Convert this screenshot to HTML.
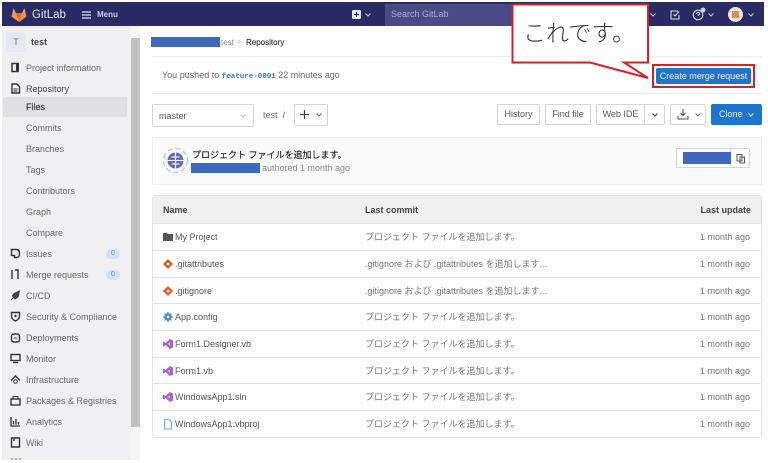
<!DOCTYPE html>
<html><head><meta charset="utf-8"><style>
*{box-sizing:border-box}
html,body{margin:0;padding:0;background:#fff;width:768px;height:463px;overflow:hidden}
body{position:relative;font-family:"Liberation Sans","Noto Sans CJK JP",sans-serif;font-size:9px;color:#555}
#w{position:absolute;left:0;top:0;width:768px;height:463px;filter:blur(.35px);overflow:hidden}
.a{position:absolute;white-space:nowrap}
.nav{font-size:9px;color:#666;line-height:12px}
.sub{left:26px}
.ic{position:absolute;left:10px}
.row{position:absolute;left:153px;width:608px;height:27px;border-top:1px solid #e5e5e5}
.row .n{position:absolute;left:22px;top:7px;font-size:9px;color:#555;line-height:12px}
.row .c{position:absolute;left:212px;top:7px;font-size:9px;color:#777;line-height:12px}
.row .t{position:absolute;right:11px;top:7px;font-size:9px;color:#777;line-height:12px}
.row svg{position:absolute;left:10px;top:8px}
.btn{position:absolute;border:1px solid #d5d5d5;border-radius:2px;background:#fff;color:#555;font-size:9px;text-align:center;height:21px;line-height:19px}
.blue{background:#3e68bd;position:absolute}
.pill{position:absolute;left:106px;width:14px;height:10px;border-radius:5px;background:#cfe2f5;color:#5b8fc8;font-size:7px;text-align:center;line-height:10px}
</style></head><body><div id="w">
<!-- header -->
<div class="a" style="left:2px;top:2px;width:762px;height:24px;background:#2a2b65"></div>
<svg class="a" style="left:11px;top:7px" width="16" height="15" viewBox="0 0 16 15"><path d="M8 15L.5 9.500 2.500 1 5 6h6l2.500-5 2 8.500z" fill="#f09a4a"/><path d="M8 15L5 6h6z" fill="#e8692e"/></svg>
<div class="a" style="left:32px;top:8px;color:#e4e4ee;font-size:11.500px;line-height:15px">GitLab</div>
<svg class="a" style="left:82px;top:11px" width="9" height="8"><path d="M0 1h9M0 4h9M0 7h9" stroke="#dfdfee" stroke-width="1.200"/></svg>
<div class="a" style="left:97px;top:9px;color:#c9c9e0;font-size:8px;font-weight:bold;line-height:11px">Menu</div>
<svg class="a" style="left:352px;top:10px" width="9" height="9"><rect width="9" height="9" rx="1.500" fill="#e8e8f2"/><path d="M4.500 2v5M2 4.500h5" stroke="#2a2b65" stroke-width="1.200"/></svg>
<svg class="a" style="left:365px;top:13px" width="6" height="4"><path d="M.5.5L3 3 5.500.5" stroke="#c9c9e0" fill="none"/></svg>
<div class="a" style="left:385px;top:4px;width:130px;height:22px;background:#4a4a85"></div>
<div class="a" style="left:391px;top:9px;color:#a9a9cf;font-size:9px;line-height:11px">Search GitLab</div>
<svg class="a" style="left:650px;top:13px" width="6" height="4"><path d="M.5.5L3 3 5.500.5" stroke="#c9c9e0" fill="none"/></svg>
<svg class="a" style="left:670px;top:10px" width="10" height="10"><path d="M8 1H1v8h8V5M3.500 4.500L5 6 9 1.500" stroke="#dcdcec" fill="none" stroke-width="1.100"/></svg>
<svg class="a" style="left:692px;top:7px" width="14" height="14"><circle cx="6" cy="8" r="4.800" stroke="#dcdcec" fill="none" stroke-width="1.100"/><path d="M4.500 7c0-2 3-2 3 0 0 1-1.500 1-1.500 2" stroke="#dcdcec" fill="none"/><circle cx="11" cy="3" r="2.500" fill="#c5d3f0"/></svg>
<svg class="a" style="left:708px;top:13px" width="6" height="4"><path d="M.5.5L3 3 5.500.5" stroke="#c9c9e0" fill="none"/></svg>
<div class="a" style="left:728px;top:7px;width:15px;height:15px;border-radius:50%;background:#f3e6d8"></div>
<div class="a" style="left:732px;top:11px;width:7px;height:7px;background:#dd8a62"></div>
<svg class="a" style="left:748px;top:13px" width="6" height="4"><path d="M.5.5L3 3 5.500.5" stroke="#c9c9e0" fill="none"/></svg>
<!-- sidebar -->
<div class="a" style="left:2px;top:26px;width:129px;height:434px;background:#f0f0f2"></div>
<div class="a" style="left:131px;top:26px;width:9px;height:434px;background:#f5f5f5"></div>
<div class="a" style="left:131px;top:38px;width:9px;height:389px;background:#c1c1c1"></div>
<div class="a" style="left:6px;top:32px;width:20px;height:20px;background:#e8e8f0;border-radius:2px;color:#777;text-align:center;line-height:20px;font-size:9px">T</div>
<div class="a" style="left:31px;top:36px;font-size:9px;font-weight:bold;color:#444;line-height:12px">test</div>
<div class="a" style="left:3px;top:97px;width:124px;height:20px;background:#e0e0e4;border-radius:2px"></div>
<svg class="ic" style="top:62px" width="11" height="11"><path d="M2 1.500h6v8H2z" fill="none" stroke="#333" stroke-width="1.500"/><path d="M6 1.500h3v8H6z" fill="#333"/></svg>
<div class="a nav sub" style="top:62px">Project information</div>
<svg class="ic" style="top:83px" width="11" height="11"><path d="M2 1h5l2.500 2.500V10H2z" fill="none" stroke="#333" stroke-width="1.400"/><path d="M3.500 6h4M3.500 8h4" stroke="#333"/></svg>
<div class="a nav sub" style="top:83px;color:#444">Repository</div>
<div class="a nav sub" style="top:101px;color:#444;-webkit-text-stroke:.25px #444">Files</div>
<div class="a nav sub" style="top:122px">Commits</div>
<div class="a nav sub" style="top:143px">Branches</div>
<div class="a nav sub" style="top:164px">Tags</div>
<div class="a nav sub" style="top:185px">Contributors</div>
<div class="a nav sub" style="top:206px">Graph</div>
<div class="a nav sub" style="top:227px">Compare</div>
<svg class="ic" style="top:248px" width="11" height="11"><path d="M1.500 1.500h5c2 0 3 1.500 3 4s-1 4-3 4h-2v-2h-3z" fill="none" stroke="#333" stroke-width="1.400"/></svg>
<div class="a nav sub" style="top:248px">Issues</div><div class="pill" style="top:249px">0</div>
<svg class="ic" style="top:269px" width="11" height="11"><path d="M2 1v9M8 3v7M5 1h3v2" fill="none" stroke="#333" stroke-width="1.400"/></svg>
<div class="a nav sub" style="top:269px">Merge requests</div><div class="pill" style="top:270px">0</div>
<svg class="ic" style="top:290px" width="11" height="11"><path d="M1 10l3-3M4 3.500L9.500 1 8 7 5 9 2.500 6z" fill="#444" stroke="#444"/></svg>
<div class="a nav sub" style="top:290px">CI/CD</div>
<svg class="ic" style="top:311px" width="11" height="11"><path d="M1.500 1.500h8v4c0 2-2 3.500-4 4.500-2-1-4-2.500-4-4.500z" fill="none" stroke="#333" stroke-width="1.400"/><circle cx="5.500" cy="5" r="1.200" fill="#333"/></svg>
<div class="a nav sub" style="top:311px">Security &amp; Compliance</div>
<svg class="ic" style="top:332px" width="11" height="11"><rect x="1.500" y="2" width="8" height="8" rx="2.500" fill="none" stroke="#333" stroke-width="1.400"/><path d="M4 6h3" stroke="#333"/></svg>
<div class="a nav sub" style="top:332px">Deployments</div>
<svg class="ic" style="top:353px" width="11" height="11"><rect x="1" y="1.500" width="9" height="6" fill="none" stroke="#333" stroke-width="1.400"/><path d="M3 9.500h5" stroke="#333" stroke-width="1.400"/></svg>
<div class="a nav sub" style="top:353px">Monitor</div>
<svg class="ic" style="top:374px" width="11" height="11"><path d="M1 6.500L5.500 2 10 6.500" fill="none" stroke="#333" stroke-width="1.400"/><circle cx="5.500" cy="7.500" r="1.800" fill="none" stroke="#333"/></svg>
<div class="a nav sub" style="top:374px">Infrastructure</div>
<svg class="ic" style="top:395px" width="11" height="11"><rect x="1" y="4" width="9" height="6" fill="none" stroke="#333" stroke-width="1.400"/><path d="M3 4V1.500h5V4" fill="none" stroke="#333"/></svg>
<div class="a nav sub" style="top:395px">Packages &amp; Registries</div>
<svg class="ic" style="top:416px" width="11" height="11"><path d="M1 1v9h9M3.500 5v3.500M6 3v5.500M8.500 6v2.500" fill="none" stroke="#333" stroke-width="1.300"/></svg>
<div class="a nav sub" style="top:416px">Analytics</div>
<svg class="ic" style="top:437px" width="11" height="11"><path d="M1.500 1h8v9h-8zM4 1v3" fill="none" stroke="#333" stroke-width="1.400"/></svg>
<div class="a nav sub" style="top:437px">Wiki</div>
<svg class="a" style="left:11px;top:458px" width="10" height="2"><path d="M0 1h2M4 1h2M8 1h2" stroke="#666"/></svg>
<!-- breadcrumb -->
<div class="blue" style="left:151px;top:37px;width:69px;height:10px"></div>
<div class="a" style="left:221px;top:37px;font-size:8px;color:#888;line-height:11px">test</div>
<div class="a" style="left:237px;top:37px;font-size:7px;color:#aaa;line-height:11px">&gt;</div>
<div class="a" style="left:246px;top:37px;font-size:8px;color:#333;line-height:11px;-webkit-text-stroke:.15px #333">Repository</div>
<div class="a" style="left:152px;top:56px;width:610px;height:1px;background:#ececec"></div>
<div class="a" style="left:162px;top:69px;font-size:9px;color:#666;line-height:12px">You pushed to <span style="font-family:'Liberation Mono',monospace;font-size:7.500px;color:#3b77b8;font-weight:bold">feature-0001</span> 22 minutes ago</div>
<div class="a" style="left:152px;top:93px;width:610px;height:1px;background:#ececec"></div>
<!-- buttons -->
<div class="btn" style="left:152px;top:104px;width:102px;height:23px;text-align:left;padding-left:6px;line-height:22px">master</div>
<svg class="a" style="left:240px;top:114px" width="6" height="4"><path d="M.5.5L3 3 5.500.5" stroke="#bbb" fill="none"/></svg>
<div class="a" style="left:263px;top:109px;font-size:9px;color:#666;line-height:12px">test &nbsp;/</div>
<div class="btn" style="left:294px;top:104px;width:34px;height:22px"></div>
<svg class="a" style="left:300px;top:110px" width="9" height="9"><path d="M4.500 0v9M0 4.500h9" stroke="#444" stroke-width="1.200"/></svg>
<svg class="a" style="left:316px;top:113px" width="6" height="4"><path d="M.5.5L3 3 5.500.5" stroke="#666" fill="none"/></svg>
<div class="btn" style="left:497px;top:104px;width:43px">History</div>
<div class="btn" style="left:545px;top:104px;width:46px">Find file</div>
<div class="btn" style="left:596px;top:104px;width:49px;border-radius:2px 0 0 2px">Web IDE</div>
<div class="btn" style="left:644px;top:104px;width:21px;border-radius:0 2px 2px 0"></div>
<svg class="a" style="left:652px;top:113px" width="6" height="4"><path d="M.5.5L3 3 5.500.5" stroke="#444" fill="none" stroke-width="1.200"/></svg>
<div class="btn" style="left:670px;top:104px;width:36px"></div>
<svg class="a" style="left:677px;top:108px" width="12" height="12"><path d="M6 1v6M3.500 5L6 7.500 8.500 5M1 8v3h10V8" fill="none" stroke="#555" stroke-width="1.100"/></svg>
<svg class="a" style="left:695px;top:113px" width="6" height="4"><path d="M.5.5L3 3 5.500.5" stroke="#777" fill="none"/></svg>
<div class="btn" style="left:711px;top:104px;width:51px;background:#1f75cb;border-color:#1f75cb;color:#e6f0fa;text-align:left;padding-left:7px">Clone</div>
<svg class="a" style="left:748px;top:113px" width="6" height="4"><path d="M.5.5L3 3 5.500.5" stroke="#e6f0fa" fill="none"/></svg>
<!-- commit box -->
<div class="a" style="left:152px;top:137px;width:610px;height:48px;background:#fafafa;border:1px solid #ececec;border-radius:2px"></div>
<svg class="a" style="left:162px;top:147px" width="27" height="27" viewBox="0 0 27 27"><circle cx="13.500" cy="13.500" r="12" fill="none" stroke="#b9c4e6" stroke-width="1.300" stroke-dasharray="5 3"/><circle cx="13.500" cy="13.500" r="8" fill="#5a68b8"/><path d="M13.500 5.500v16M5.500 13.500h16M9.500 10h8M9.500 17h8" stroke="#eef" stroke-width="1.300"/></svg>
<div class="a" style="left:192px;top:148px;font-size:9px;color:#222;line-height:14px;-webkit-text-stroke:.15px #222">プロジェクト ファイルを追加します。</div>
<div class="blue" style="left:191px;top:163px;width:69px;height:10px"></div>
<div class="a" style="left:262px;top:162px;font-size:9px;color:#888;line-height:12px">authored 1 month ago</div>
<div class="btn" style="left:676px;top:148px;width:74px;height:20px"></div>
<div class="a" style="left:730px;top:149px;width:1px;height:18px;background:#ddd"></div>
<div class="blue" style="left:683px;top:152px;width:48px;height:12px"></div>
<svg class="a" style="left:736px;top:153px" width="9" height="11"><path d="M1 1.500h5V8H1zM4 4h4.500v6H4z" fill="#fff" stroke="#555"/></svg>
<!-- table -->
<div class="a" style="left:152px;top:195px;width:610px;height:243px;border:1px solid #e5e5e5;border-radius:3px"></div>
<div class="a" style="left:153px;top:196px;width:608px;height:27px;background:#f0f0f0"></div>
<div class="a" style="left:163px;top:204px;font-size:9px;font-weight:bold;color:#444;line-height:12px">Name</div>
<div class="a" style="left:365px;top:204px;font-size:9px;font-weight:bold;color:#444;line-height:12px">Last commit</div>
<div class="a" style="right:17px;top:204px;font-size:9px;font-weight:bold;color:#444;line-height:12px">Last update</div>
<div class="row" style="top:223px"><svg width="10" height="9"><path d="M0 1h4l1 1h5v7H0z" fill="#555"/></svg><div class="n">My Project</div><div class="c">プロジェクト ファイルを追加します。</div><div class="t">1 month ago</div></div>
<div class="row" style="top:250px"><svg width="10" height="10"><path d="M5 0l5 5-5 5-5-5z" fill="#d9622b"/><circle cx="5" cy="5" r="1.300" fill="#fff"/></svg><div class="n">.gitattributes</div><div class="c">.gitignore および .gitattributes を追加します...</div><div class="t">1 month ago</div></div>
<div class="row" style="top:277px"><svg width="10" height="10"><path d="M5 0l5 5-5 5-5-5z" fill="#d9622b"/><circle cx="5" cy="5" r="1.300" fill="#fff"/></svg><div class="n">.gitignore</div><div class="c">.gitignore および .gitattributes を追加します...</div><div class="t">1 month ago</div></div>
<div class="row" style="top:303px"><svg width="10" height="10"><circle cx="5" cy="5" r="3.800" fill="#4a90c8"/><circle cx="5" cy="5" r="1.300" fill="#fff"/><path d="M5 0v10M0 5h10M1.500 1.500l7 7M8.500 1.500l-7 7" stroke="#4a90c8" stroke-width="1.200" stroke-dasharray="2 6"/></svg><div class="n">App.config</div><div class="c">プロジェクト ファイルを追加します。</div><div class="t">1 month ago</div></div>
<div class="row" style="top:330px"><svg width="10" height="10"><path d="M7 0l3 1.500v7L7 10 2.500 6 1 7.500 0 7V3l1-.5L2.500 4zM7 3.500L5 5l2 1.500z" fill="#b060c8" fill-rule="evenodd"/></svg><div class="n">Form1.Designer.vb</div><div class="c">プロジェクト ファイルを追加します。</div><div class="t">1 month ago</div></div>
<div class="row" style="top:357px"><svg width="10" height="10"><path d="M7 0l3 1.500v7L7 10 2.500 6 1 7.500 0 7V3l1-.5L2.500 4zM7 3.500L5 5l2 1.500z" fill="#b060c8" fill-rule="evenodd"/></svg><div class="n">Form1.vb</div><div class="c">プロジェクト ファイルを追加します。</div><div class="t">1 month ago</div></div>
<div class="row" style="top:383px"><svg width="10" height="10"><path d="M7 0l3 1.500v7L7 10 2.500 6 1 7.500 0 7V3l1-.5L2.500 4zM7 3.500L5 5l2 1.500z" fill="#b060c8" fill-rule="evenodd"/></svg><div class="n">WindowsApp1.sln</div><div class="c">プロジェクト ファイルを追加します。</div><div class="t">1 month ago</div></div>
<div class="row" style="top:410px"><svg width="10" height="11"><path d="M1.500.5h4.500l2.500 2.500v7h-7z" fill="#fff" stroke="#6aaee0"/></svg><div class="n">WindowsApp1.vbproj</div><div class="c">プロジェクト ファイルを追加します。</div><div class="t">1 month ago</div></div>
<!-- callout -->
<svg class="a" style="left:0;top:0" width="768" height="100"><path d="M512.500 4.500H648V62.500H624L648 78 590 62.500H512.500z" fill="#fff" stroke="#d2232a" stroke-width="2"/><rect x="653" y="65" width="101" height="22" fill="none" stroke="#d2232a" stroke-width="2"/></svg>
<div class="a" style="left:523px;top:17px;font-size:23px;line-height:28px;color:#333;font-family:'Noto Sans CJK JP',sans-serif;font-weight:300">これです。</div>
<div class="a" style="left:656px;top:68px;width:95px;height:16px;background:#1f75cb;border-radius:2px;color:#e6f0fa;font-size:9px;text-align:center;line-height:16px">Create merge request</div>
</div></body></html>
